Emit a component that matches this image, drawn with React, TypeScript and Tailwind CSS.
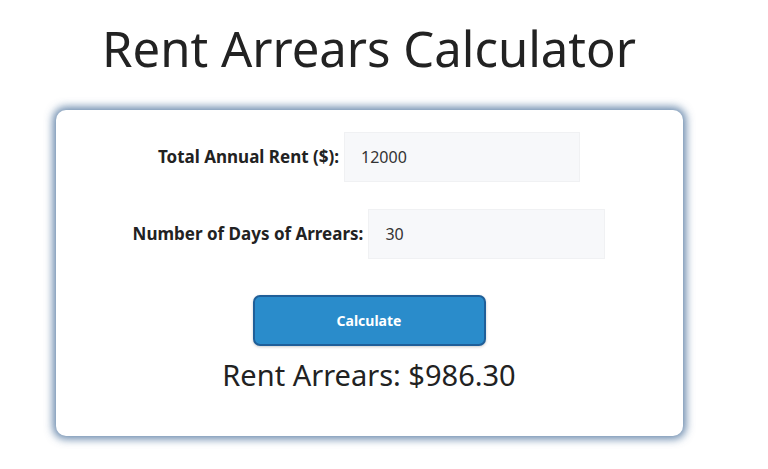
export default function App() {
  return (
    <div
      className="w-[738px] bg-white pt-[16px] pb-[33px] flex flex-col items-center text-[#222]"
      style={{ fontFamily: '"Noto Sans", "Open Sans", sans-serif' }}
    >
      <h1 className="text-[49px] leading-[64px] font-normal mb-[30px]">
        Rent Arrears Calculator
      </h1>
      <div className="w-[627px] h-[326px] bg-white rounded-[10px] shadow-[0_0_9px_3px_rgba(65,105,150,0.8)] flex flex-col items-center pt-[22px]">
        <div className="flex items-center gap-[5px]">
          <label className="text-[17px] font-bold">Total Annual Rent ($):</label>
          <input
            defaultValue="12000"
            className="w-[236px] h-[50px] bg-[#f7f8fa] border border-[#f0f1f3] pl-[16px] text-[16px] text-[#333] outline-none"
          />
        </div>
        <div className="flex items-center gap-[5px] mt-[27px]">
          <label className="text-[17px] font-bold">Number of Days of Arrears:</label>
          <input
            defaultValue="30"
            className="w-[237px] h-[50px] bg-[#f7f8fa] border border-[#f0f1f3] pl-[16px] text-[16px] text-[#333] outline-none"
          />
        </div>
        <button className="mt-[36px] w-[233px] h-[51px] bg-[#2a8ccb] border-2 border-[#1f5f99] rounded-[7px] text-white text-[14px] font-bold shadow-[0_1px_3px_rgba(0,0,0,0.2)]">
          Calculate
        </button>
        <p className="mt-[9px] text-[29px] leading-[40px] text-[#222]">
          Rent Arrears: $986.30
        </p>
      </div>
    </div>
  );
}
